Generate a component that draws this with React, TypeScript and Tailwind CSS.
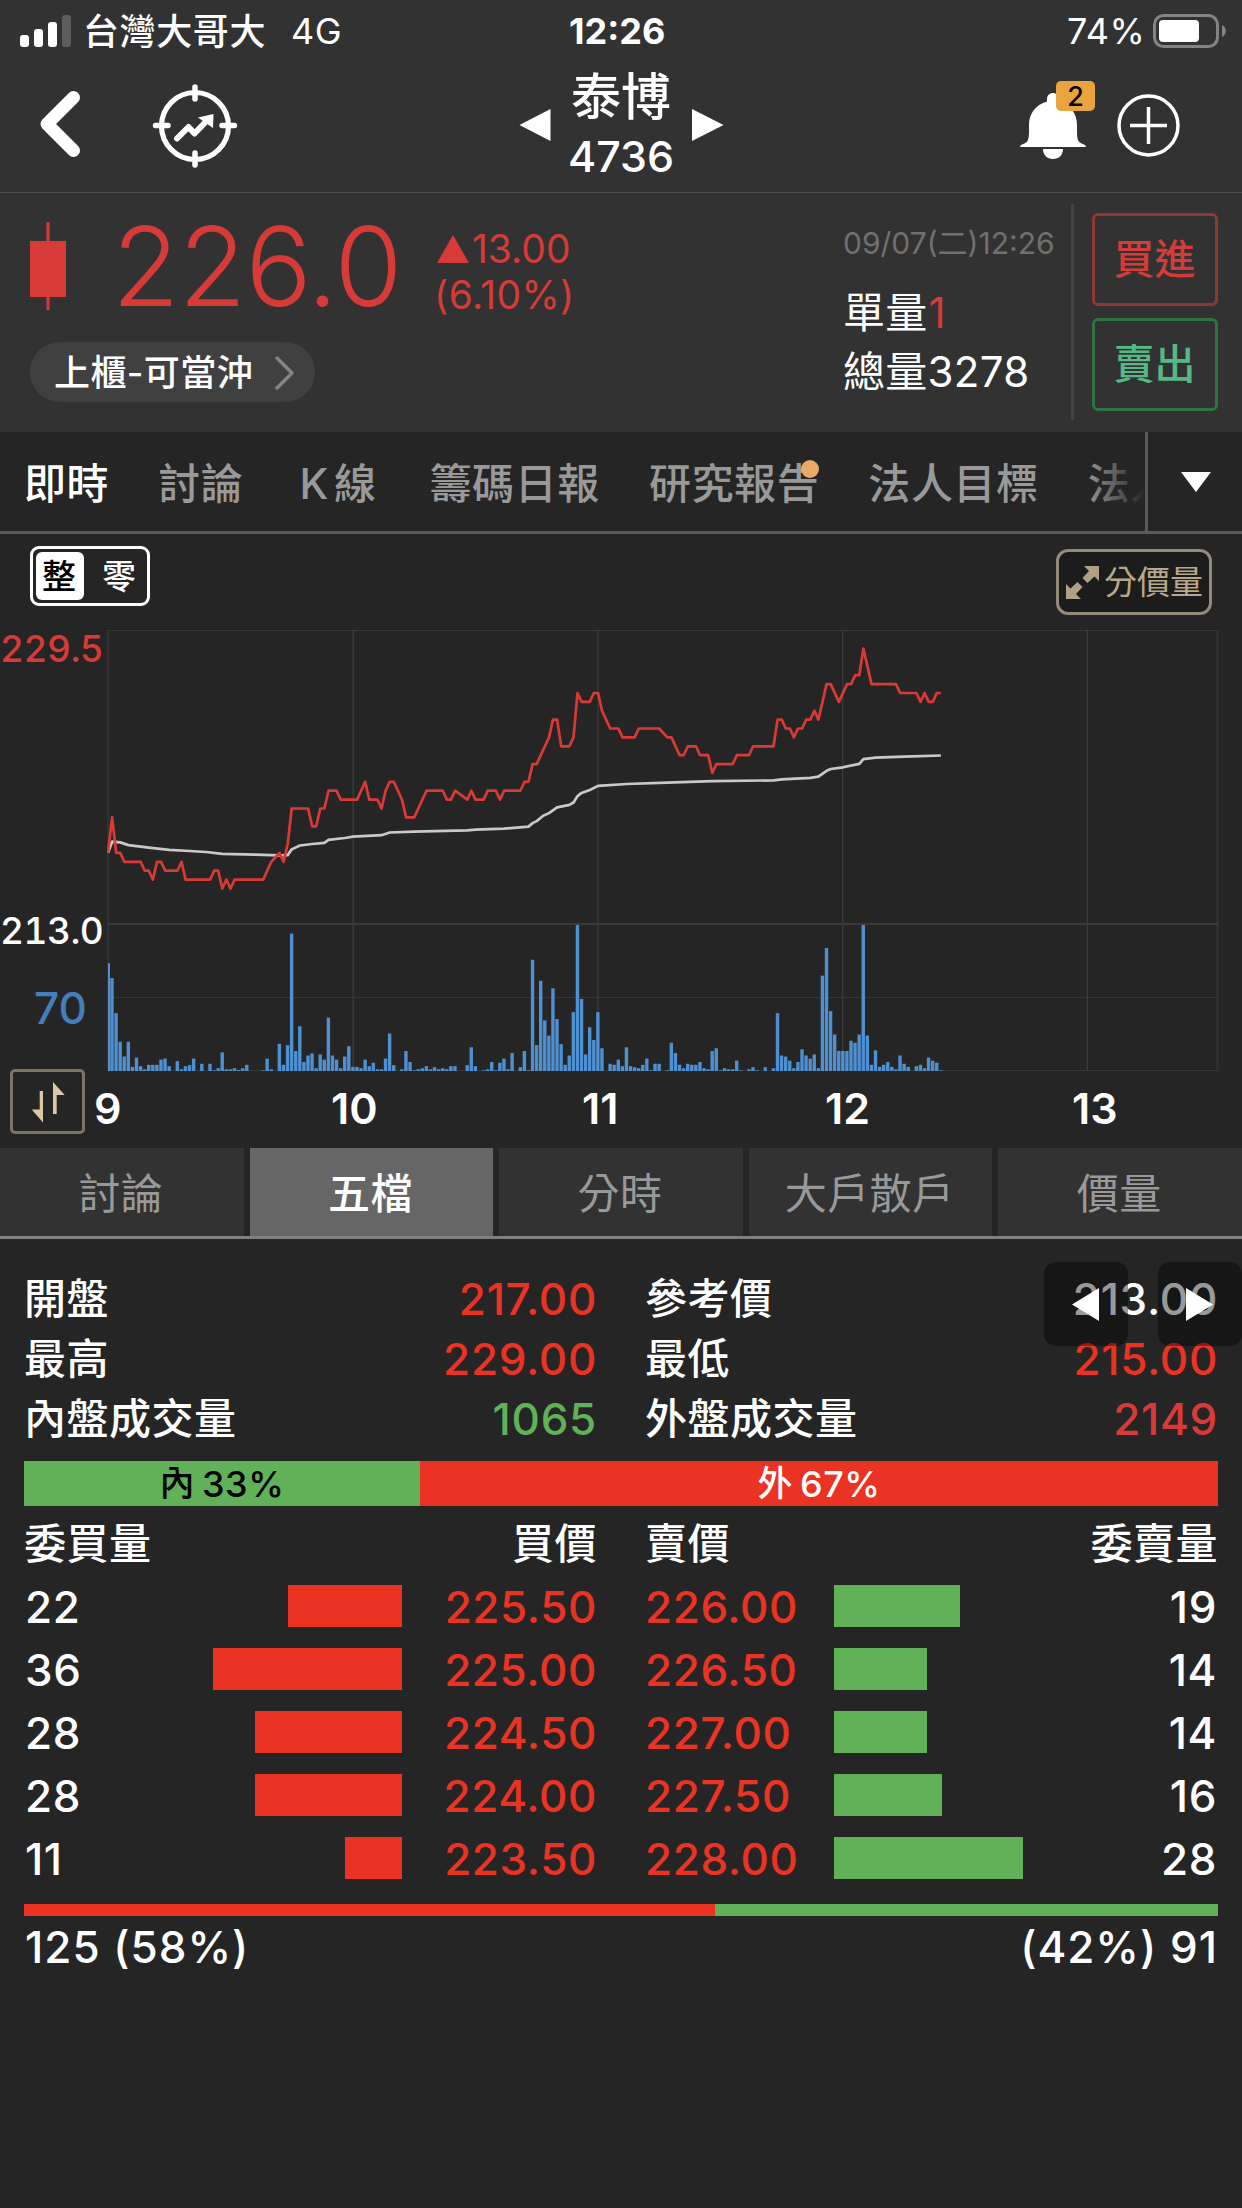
import clsx from 'clsx';

type Quote = {
    bidQty: number;
    bidWidth: number;
    bid: string;
    ask: string;
    askWidth: number;
    askQty: number;
};

const quotes: Quote[] = [
    { bidQty: 22, bidWidth: 114, bid: '225.50', ask: '226.00', askWidth: 126, askQty: 19 },
    { bidQty: 36, bidWidth: 189, bid: '225.00', ask: '226.50', askWidth: 93, askQty: 14 },
    { bidQty: 28, bidWidth: 147, bid: '224.50', ask: '227.00', askWidth: 93, askQty: 14 },
    { bidQty: 28, bidWidth: 147, bid: '224.00', ask: '227.50', askWidth: 108, askQty: 16 },
    { bidQty: 11, bidWidth: 57, bid: '223.50', ask: '228.00', askWidth: 189, askQty: 28 },
];

// [minute since 09:00, price], only the points where the slope changes
const prices: [number, number][] = [
    [0, 217], [1, 219], [2, 217], [3, 217], [4, 216.5], [8, 216.5], [9, 216], [10, 216], [11, 215.5], [12, 216.5],
    [13, 216.5], [14, 216], [17, 216], [18, 216.5], [19, 215.5], [25, 215.5], [26, 216], [27, 216], [28, 215],
    [29, 215.5], [30, 215], [31, 215.5], [38, 215.5], [40, 216.5], [42, 217], [43, 216.5], [44, 217.5], [45, 219.5],
    [49, 219.5], [50, 218.5], [51, 218.5], [52, 219.5], [53, 219.5], [54, 220.5], [56, 220.5], [57, 220], [61, 220],
    [63, 221], [64, 220], [66, 220], [67, 219.5], [68, 220.5], [69, 221], [70, 221], [72, 220], [73, 219], [75, 219],
    [78, 220.5], [82, 220.5], [83, 220], [84, 220], [85, 220.5], [88, 220], [89, 220.5], [90, 220], [92, 220],
    [93, 220.5], [95, 220.5], [96, 220], [97, 220.5], [101, 220.5], [102, 221], [103, 221], [104, 222], [105, 222],
    [108, 223.5], [109, 224.5], [110, 224.5], [111, 223], [113, 223], [114, 223.5], [115, 226], [116, 225.5],
    [118, 225.5], [119, 226], [120, 226], [121, 225], [123, 224], [125, 224], [126, 223.5], [129, 223.5], [130, 224],
    [135, 224], [137, 223.5], [138, 223.5], [140, 222.5], [141, 222.5], [142, 223], [144, 223], [145, 222.5],
    [147, 222.5], [148, 221.5], [149, 222], [153, 222], [154, 222.5], [157, 222.5], [158, 223], [163, 223],
    [164, 224.5], [165, 224.5], [166, 224], [167, 224], [168, 223.5], [169, 224], [170, 224], [171, 224.5],
    [172, 224.5], [173, 225], [174, 224.5], [176, 226.5], [177, 226.5], [179, 225.5], [181, 226.5], [182, 226.5],
    [183, 227], [184, 227], [185, 228.5], [187, 226.5], [193, 226.5], [194, 226], [198, 226], [199, 225.5],
    [200, 226], [201, 225.5], [202, 225.5], [203, 226], [204, 226],
];

// [minute, price] of the running average
const average: [number, number][] = [
    [0, 217], [1, 217.63], [3, 217.59], [5, 217.44], [10, 217.3], [15, 217.17], [20, 217.11], [24, 217.05],
    [28, 216.95], [36, 216.9], [42, 216.86], [44, 216.88], [45, 217.2], [47, 217.42], [50, 217.5], [53, 217.57],
    [54, 217.73], [58, 217.84], [60, 217.92], [67, 218], [69, 218.15], [75, 218.2], [80, 218.22], [88, 218.27],
    [90, 218.31], [97, 218.37], [103, 218.48], [104, 218.68], [105, 218.79], [106.6, 219.09], [108, 219.24],
    [110, 219.57], [113, 219.7], [114, 219.84], [115, 220.2], [116, 220.38], [118, 220.54], [120, 220.77],
    [127, 220.88], [137, 220.96], [148, 221.04], [163, 221.08], [165, 221.14], [172, 221.23], [174, 221.29],
    [176, 221.62], [177, 221.72], [180, 221.82], [184, 222.01], [185, 222.28], [188, 222.36], [195, 222.42],
    [204, 222.48],
];

// one entry a minute
const volumes = [
    313, 270, 168, 85, 42, 85, 12, 39, 14, 5, 18, 18, 18, 33, 36, 14, 0, 29, 5, 14,
    17, 36, 0, 21, 0, 21, 2, 8, 54, 5, 5, 8, 3, 8, 18, 0, 0, 0, 2, 36,
    5, 0, 79, 18, 75, 399, 58, 130, 26, 45, 51, 8, 48, 33, 155, 45, 33, 8, 42, 72,
    12, 12, 8, 33, 14, 24, 5, 5, 36, 109, 17, 0, 5, 58, 26, 2, 5, 8, 14, 5,
    11, 5, 8, 5, 14, 14, 0, 0, 17, 69, 14, 0, 2, 5, 26, 2, 24, 36, 5, 52,
    0, 11, 58, 2, 323, 75, 262, 147, 103, 240, 151, 78, 18, 45, 171, 424, 209, 48, 127, 90,
    171, 66, 0, 21, 18, 33, 14, 69, 14, 11, 8, 18, 36, 2, 21, 21, 0, 2, 82, 52,
    18, 8, 21, 18, 18, 26, 8, 5, 58, 66, 2, 8, 5, 5, 30, 2, 0, 5, 11, 2,
    0, 11, 0, 8, 168, 45, 42, 30, 8, 26, 63, 45, 36, 48, 8, 277, 357, 174, 106, 58,
    58, 58, 88, 82, 106, 424, 103, 18, 60, 12, 18, 26, 12, 5, 45, 21, 12, 0, 14, 18,
    8, 39, 30, 24, 2,
];

const MINUTE = 4.083;
const VOLUME_SCALE = 2.904;

const toPoints = (data: [number, number][]) =>
    data.map(([m, p]) => `${(m * MINUTE + 1).toFixed(1)},${(294 - (p - 213) * 17.77).toFixed(1)}`).join(' ');

function StatusBar() {
    return (
        <div className="flex h-[62px] items-center text-[36px] leading-none">
            <div className="ml-5 flex h-8 items-end gap-[5px]">
                <div className="h-3 w-[9px] rounded-[3px] bg-white" />
                <div className="h-[18px] w-[9px] rounded-[3px] bg-white" />
                <div className="h-[25px] w-[9px] rounded-[3px] bg-white" />
                <div className="h-8 w-[9px] rounded-[3px] bg-[#5d5d5d]" />
            </div>
            <div className="ml-3 w-[208px] pt-px font-medium tracking-[0.6px] whitespace-nowrap">台灣大哥大</div>
            <div className="w-[278px] tracking-[0.5px]">4G</div>
            <div className="w-[498px] font-bold">12:26</div>
            <div className="tracking-[0.5px]">74%</div>
            <svg className="ml-auto mr-4" width="73" height="34" viewBox="0 0 73 34">
                <rect x="1.5" y="1.5" width="63" height="31" rx="9" fill="none" stroke="#848484" strokeWidth="3" />
                <rect x="6" y="6" width="40" height="22" rx="4" fill="#fff" />
                <path d="M69 11c5 2 5 10 0 12z" fill="#848484" />
            </svg>
        </div>
    );
}

function NavBar() {
    return (
        <div className="flex h-[131px] border-b border-[#505050]">
            <svg className="mt-7 ml-[38px]" width="44" height="68" viewBox="38 90 44 68">
                <path d="M73.5 97.5 47 124l26.5 26.5" fill="none" stroke="#fff" strokeWidth="13" strokeLinecap="round" strokeLinejoin="round" />
            </svg>
            <svg className="mt-[21px] ml-[69px]" width="88" height="86" viewBox="151 83 88 86">
                <circle cx="195" cy="126" r="33.5" fill="none" stroke="#fff" strokeWidth="5.2" />
                <path d="M195 87v12M195 153v12M155.500 125.500h12.500M222 125.500h12.500" stroke="#fff" strokeWidth="5.500" strokeLinecap="round" />
                <path d="M177 138.500 188.500 127l6 6.500L208 119.500" fill="none" stroke="#fff" strokeWidth="6" strokeLinecap="round" strokeLinejoin="round" />
                <path d="M198 117.500 213.500 114 213 128z" fill="#fff" />
            </svg>
            <svg className="mt-[47px] ml-[280px]" width="32" height="32" viewBox="0 0 32 32">
                <path d="M0.500 16 31.500 0v32z" fill="#fff" />
            </svg>
            <div className="ml-[17px] flex w-[106px] flex-col items-center pt-[5px] font-medium">
                <div className="text-[50px] leading-[60px] whitespace-nowrap">泰博</div>
                <div className="text-[43px] leading-[58px]">4736</div>
            </div>
            <svg className="mt-[47px] ml-[18px]" width="32" height="32" viewBox="0 0 32 32">
                <path d="M31.500 16 0 0v32z" fill="#fff" />
            </svg>
            <div className="relative mt-[31px] ml-[296px] h-[66px] w-[66px]">
                <svg width="66" height="66" viewBox="1020 93 66 66" fill="#fff">
                    <path d="M1053 93c3.500 0 6 2.500 6 6v2.500c11 3 18 12 18 23 0 9-.3 13 1.500 16.500 1.500 3 7.500 3 7.500 6h-66c0-3 6-3 7.500-6 1.800-3.500 1.500-7.500 1.500-16.500 0-11 7-20 18-23V99c0-3.500 2.500-6 6-6z" />
                    <path d="M1043 149h20c0 6-4 10-10 10s-10-4-10-10z" />
                </svg>
                <div className="absolute -top-3 left-9 flex h-[30px] w-[39px] items-center justify-center rounded-[5px] bg-[#e9a440] text-[27px] leading-none font-medium text-black">
                    2
                </div>
            </div>
            <svg className="mt-8 ml-[30px]" width="64" height="64" viewBox="0 0 64 64">
                <circle cx="32.500" cy="31.500" r="29.500" fill="none" stroke="#fff" strokeWidth="3.500" />
                <path d="M14 31.500h37M32.500 13v37" stroke="#fff" strokeWidth="3.500" />
            </svg>
        </div>
    );
}

function PriceHeader() {
    return (
        <div className="flex h-[239px]">
            <div className="w-[844px] pt-[19px] pl-[30px]">
                <div className="flex h-[108px] items-center text-[#d63b37]">
                    <svg width="36" height="88" viewBox="0 0 36 88" fill="#d63b37">
                        <path d="M16.500 0h3v88h-3zM0 19h36v56H0z" />
                    </svg>
                    <div className="ml-[46px] w-[322px] text-[110px] leading-none font-[360] tracking-[-0.8px]">226.0</div>
                    <div className="mt-3 text-[39px] leading-[46px] font-[380]">
                        <div className="flex items-center pl-[3px]">
                            <svg className="mr-[3px]" width="32" height="28" viewBox="0 0 32 28">
                                <path d="M16 0 32 28H0z" fill="#d63b37" />
                            </svg>
                            13.00
                        </div>
                        <div className="tracking-[0.4px]">(6.10%)</div>
                    </div>
                </div>
                <div className="mt-[22px] flex h-[60px] w-[285px] items-center rounded-full bg-[#404040] pt-px pl-6 text-[36px] leading-none font-medium tracking-[0.4px]">
                    <span className="w-[221px] whitespace-nowrap">上櫃-可當沖</span>
                    <svg width="20" height="34" viewBox="0 0 20 34">
                        <path d="M2 2 17 17 2 32" fill="none" stroke="#838383" strokeWidth="3.500" strokeLinecap="round" strokeLinejoin="round" />
                    </svg>
                </div>
            </div>
            <div className="w-[227px] pt-[25px] whitespace-nowrap">
                <div className="-ml-px text-[30px] leading-[50px] font-[370] text-[#707070]">09/07(二)12:26</div>
                <div className="mt-[15px] -ml-px text-[42px] leading-[59px] font-[370] tracking-[0.3px]">
                    單量<span className="pl-px text-[#d63b37]">1</span>
                </div>
                <div className="-ml-px text-[42px] leading-[59px] font-[370] tracking-[0.3px]">總量3278</div>
            </div>
            <div className="mt-[11px] h-[216px] w-[3px] bg-[#444444]" />
            <div className="mt-5 ml-[18px] flex flex-col gap-3 text-[41px] leading-none font-medium">
                <div className="flex h-[93px] w-[126px] items-center justify-center rounded-[6px] border-3 border-[#8c3a34] pr-px text-[#d63b37]">買進</div>
                <div className="flex h-[93px] w-[126px] items-center justify-center rounded-[6px] border-3 border-[#2f7342] pr-px text-[#55b985]">賣出</div>
            </div>
        </div>
    );
}

function TopTabs() {
    return (
        <div className="flex h-[102px] border-b-3 border-[#595959] text-[42px] leading-none font-medium text-[#999]">
            <div className="relative flex w-[1145px] items-center gap-[49px] overflow-hidden pt-[5px] pl-6 tracking-[0.6px] whitespace-nowrap">
                <span className="text-white">即時</span>
                <span>討論</span>
                <span className="mr-1 ml-[7px] flex gap-[5px]">
                    <span>K</span>
                    <span>線</span>
                </span>
                <span>籌碼日報</span>
                <span className="relative">
                    研究報告
                    <i className="absolute -top-[3px] right-0 h-[18px] w-[18px] rounded-full bg-[#e8aa66]" />
                </span>
                <span>法人目標</span>
                <span>法人</span>
                <div className="absolute inset-y-0 right-0 w-[60px] bg-linear-to-r from-transparent to-[#252525]" />
            </div>
            <div className="flex flex-1 items-center justify-center border-l-3 border-[#595959] pl-[2px]">
                <svg width="30" height="20" viewBox="0 0 30 20">
                    <path d="M0 0h30L15 20z" fill="#fff" />
                </svg>
            </div>
        </div>
    );
}

function Chart() {
    return (
        <div className="h-[614px]">
            <div className="flex h-[96px] justify-between px-[30px] pt-3">
                <div className="flex h-[60px] w-[120px] items-center rounded-[9px] border-3 border-white pl-[3px] text-[34px] leading-none font-medium">
                    <div className="flex h-12 w-12 items-center justify-center rounded-[6px] bg-white pt-px pr-[2px] text-black">整</div>
                    <div className="ml-[18px] pt-px">零</div>
                </div>
                <div className="mt-[3px] flex h-[66px] w-[156px] items-center rounded-[12px] border-3 border-[#938a7a] bg-[#1c1c1c] pl-[7px] text-[33px] leading-none text-[#b8a78a]">
                    <svg className="mr-[5px]" width="33" height="33" viewBox="0 0 33 33" fill="#b0a084">
                        <path d="M18 0h15v15l-4.500-4.500-7 6.500-5-5 6.500-7zM15 33H0V18l4.500 4.500 7-6.500 5 5-6.500 7z" />
                    </svg>
                    <span className="whitespace-nowrap">分價量</span>
                </div>
            </div>
            <div className="flex h-[442px] font-medium">
                <div className="flex w-[107px] flex-col">
                    <div className="text-[37px] leading-[38px] tracking-[-0.5px] text-[#d63b37] tabular-nums">229.5</div>
                    <div className="mt-[244px] text-[37px] leading-[38px] tracking-[-0.5px] tabular-nums">213.0</div>
                    <div className="mt-[36px] pl-[34px] text-[44px] leading-[44px] text-[#447fbb]">70</div>
                </div>
                <svg width="1112" height="442" viewBox="0 0 1112 442">
                    <path d="M1 0.500h1110M1 367.500h1110M1 440.500h1110" stroke="#363636" />
                    <path d="M246.200 0v441M491 0v441M735.700 0v441M980.400 0v441" stroke="#3b3b3b" strokeWidth="1.300" />
                    <path d="M1 0v441M1110.500 0v441" stroke="#303030" strokeWidth="2.500" />
                    <path d="M1 294h1110" stroke="#3a3a3a" strokeWidth="2" />
                    {volumes.map((v, i) => (
                        <rect
                            key={i}
                            x={i === 0 ? 1 : i * MINUTE - 0.8}
                            y={441 - v / VOLUME_SCALE}
                            width={i === 0 ? 2 : 3.4}
                            height={v / VOLUME_SCALE}
                            fill="#4f90d0"
                        />
                    ))}
                    <polyline points={toPoints(average)} fill="none" stroke="#c9c9c9" strokeWidth="2.700" strokeLinejoin="round" />
                    <polyline points={toPoints(prices)} fill="none" stroke="#d93a36" strokeWidth="2.700" strokeLinejoin="round" />
                </svg>
            </div>
            <div className="flex h-[76px] items-center pb-1 text-[43px] leading-none font-semibold">
                <div className="-mt-[13px] ml-[10px] flex h-[65px] w-[75px] items-center justify-center rounded-[5px] border-3 border-[#7d7463]">
                    <svg width="34" height="42" viewBox="32 1081 34 42" fill="#dcc8a4">
                        <path d="M40.700 1091H44v31.500L32.700 1109.500h8zM54 1082l11.700 13h-8v19H54z" />
                    </svg>
                </div>
                <div className="w-[236px] pl-[9px]">9</div>
                <div className="w-[251px] pl-[10px]">10</div>
                <div className="w-[243px] pl-[10px]">11</div>
                <div className="w-[247px] pl-[10px]">12</div>
                <div className="pl-[10px]">13</div>
            </div>
        </div>
    );
}

function SectionTabs() {
    const tabs = ['討論', '五檔', '分時', '大戶散戶', '價量'];
    return (
        <div className="grid h-[91px] grid-cols-5 gap-[6px] border-b-3 border-[#808080] text-[42px] leading-none">
            {tabs.map((tab) => (
                <div
                    key={tab}
                    className={clsx(
                        'flex items-center justify-center pt-1 pr-[2px] tracking-[0.4px]',
                        tab === '五檔' ? 'bg-[#666] font-medium text-white' : 'bg-[#323232] text-[#999]'
                    )}
                >
                    {tab}
                </div>
            ))}
        </div>
    );
}

function Stat({ label, value, color }: { label: string; value: string; color: string }) {
    return (
        <div className="flex h-[60px] items-center justify-between">
            <span className="text-[42px] tracking-[0.5px]">{label}</span>
            <span className={clsx('text-[44px] tracking-[0.7px]', color)}>{value}</span>
        </div>
    );
}

function OrderBook() {
    return (
        <div className="relative px-6 pt-[30px] leading-none font-medium">
            <div className="grid grid-cols-[573px_573px] gap-x-12">
                <Stat label="開盤" value="217.00" color="text-[#eb3323]" />
                <Stat label="參考價" value="213.00" color="text-white" />
                <Stat label="最高" value="229.00" color="text-[#eb3323]" />
                <Stat label="最低" value="215.00" color="text-[#eb3323]" />
                <Stat label="內盤成交量" value="1065" color="text-[#60b158]" />
                <Stat label="外盤成交量" value="2149" color="text-[#d63b37]" />
            </div>

            {/* Floating pager */}
            <div className="absolute top-[23px] right-0 flex gap-[30px]">
                <div className="flex h-[84px] w-[84px] items-center rounded-[12px] bg-black/40 pl-7">
                    <svg width="27" height="33" viewBox="0 0 27 33"><path d="M0 16.500 27 0v33z" fill="#fff" /></svg>
                </div>
                <div className="flex h-[84px] w-[84px] items-center rounded-[12px] bg-black/40 pl-7">
                    <svg width="27" height="33" viewBox="0 0 27 33"><path d="M27 16.500 0 0v33z" fill="#fff" /></svg>
                </div>
            </div>

            <div className="mt-3 flex h-[45px] text-[36px] tracking-[0.5px]">
                <div className="flex w-[396px] items-center justify-center gap-[7px] bg-[#60b158] text-black">
                    <span className="text-[35px]">內</span>33%
                </div>
                <div className="flex flex-1 items-center justify-center gap-[7px] bg-[#eb3323]">
                    <span className="text-[35px]">外</span>67%
                </div>
            </div>

            <div className="mt-2 grid h-[60px] grid-cols-[573px_573px] items-center gap-x-12 text-[42px] tracking-[0.5px]">
                <div className="flex justify-between"><span>委買量</span><span>買價</span></div>
                <div className="flex justify-between"><span>賣價</span><span>委賣量</span></div>
            </div>

            {quotes.map((q) => (
                <div key={q.bid} className="flex h-[63px] items-center text-[44px] tracking-[0.6px]">
                    <div className="w-[120px] pt-[3px] pl-px">{q.bidQty}</div>
                    <div className="flex w-[258px] justify-end">
                        <div className="h-[42px] bg-[#eb3323]" style={{ width: q.bidWidth }} />
                    </div>
                    <div className="w-[195px] pt-[3px] text-right text-[#eb3323]">{q.bid}</div>
                    <div className="ml-12 w-[189px] pt-[3px] text-[#eb3323]">{q.ask}</div>
                    <div className="h-[42px] bg-[#60b158]" style={{ width: q.askWidth }} />
                    <div className="ml-auto pt-[3px] pr-px">{q.askQty}</div>
                </div>
            ))}

            <div className="mt-[15px] flex h-3">
                <div className="w-[691px] bg-[#eb3323]" />
                <div className="flex-1 bg-[#60b158]" />
            </div>
            <div className="flex h-[60px] items-center justify-between pt-[2px] pl-px text-[44px] tracking-[1px]">
                <span>125 (58%)</span>
                <span>(42%) 91</span>
            </div>
        </div>
    );
}

export default function App() {
    return (
        <div className="h-[2208px] w-[1242px] overflow-hidden bg-[#252525] font-[Inter,'Noto_Sans_CJK_TC',sans-serif] text-white">
            <div className="bg-[#323232]">
                <StatusBar />
                <NavBar />
                <PriceHeader />
            </div>
            <TopTabs />
            <Chart />
            <SectionTabs />
            <OrderBook />
        </div>
    );
}
